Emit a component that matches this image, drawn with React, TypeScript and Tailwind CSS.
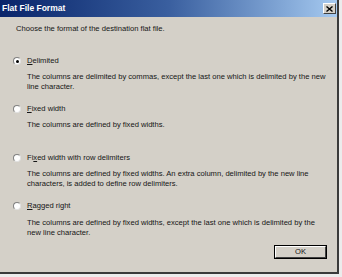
import React from 'react';

const font = { fontFamily: '"Liberation Sans", Arial, sans-serif' };

const Radio = ({ checked }: { checked?: boolean }) => (
  <span className="relative inline-block w-[8px] h-[8px] rounded-full bg-white border border-t-[#808080] border-l-[#808080] border-r-[#e0e0e0] border-b-[#e0e0e0] shrink-0">
    {checked && (
      <span className="absolute left-[1.5px] top-[1.5px] w-[3px] h-[3px] rounded-full bg-black" />
    )}
  </span>
);

interface OptionProps {
  label: string;
  mnemonic: number;
  checked?: boolean;
  lines: string[];
  gap: string;
}

const Option = ({ label, mnemonic, checked, lines, gap }: OptionProps) => (
  <div>
    <div className="flex items-center h-[10px] pl-[13px]">
      <Radio checked={checked} />
      <span className="ml-[6px] leading-[10px]">
        {label.slice(0, mnemonic)}
        <span className="underline">{label[mnemonic]}</span>
        {label.slice(mnemonic + 1)}
      </span>
    </div>
    <div className={`${gap} pl-[27px] leading-[10px]`}>
      {lines.map((l, i) => (
        <div key={i}>{l}</div>
      ))}
    </div>
  </div>
);

export default function App() {
  return (
    <div className="w-[342px] h-[277px] bg-[#ececec] overflow-hidden" style={font}>
      <div className="w-[339px] h-[274px] bg-[#d4d0c8] border-r-2 border-b-2 border-[#3a3a3a] flex flex-col text-[7.6px] text-[#151515]">
        {/* Title bar */}
        <div className="h-[17px] flex items-center justify-between pl-[2px] pr-[1px] bg-gradient-to-r from-[#0a246a] via-[#3a5f9f] to-[#a6caf0]">
          <span className="text-white font-bold text-[8.5px]">Flat File Format</span>
          <div className="w-[13px] h-[11px] bg-[#d4d0c8] border border-t-white border-l-white border-r-[#404040] border-b-[#404040] flex items-center justify-center">
            <svg width="7" height="6" viewBox="0 0 7 6">
              <path d="M0.5 0.5 L6.5 5.5 M6.5 0.5 L0.5 5.5" stroke="#000" strokeWidth="1.4" />
            </svg>
          </div>
        </div>

        <div className="mt-[7px] pl-[16px] leading-[10px]">Choose the format of the destination flat file.</div>

        <div className="mt-[22px]">
          <Option
            label="Delimited"
            mnemonic={0}
            checked
            gap="mt-[6px]"
            lines={[
              'The columns are delimited by commas, except the last one which is delimited by the new',
              'line character.',
            ]}
          />
        </div>
        <div className="mt-[12px]">
          <Option
            label="Fixed width"
            mnemonic={0}
            gap="mt-[6px]"
            lines={['The columns are defined by fixed widths.']}
          />
        </div>
        <div className="mt-[23px]">
          <Option
            label="Fixed width with row delimiters"
            mnemonic={2}
            gap="mt-[6px]"
            lines={[
              'The columns are defined by fixed widths. An extra column, delimited by the new line',
              'characters, is added to define row delimiters.',
            ]}
          />
        </div>
        <div className="mt-[12px]">
          <Option
            label="Ragged right"
            mnemonic={0}
            gap="mt-[7px]"
            lines={[
              'The columns are defined by fixed widths, except the last one which is delimited by the',
              'new line character.',
            ]}
          />
        </div>

        <div className="mt-[7px] flex justify-end pr-[10px]">
          <div className="w-[53px] h-[14px] border border-black">
            <div className="w-full h-full bg-[#d4d0c8] border border-t-white border-l-white border-r-[#404040] border-b-[#404040] flex items-center justify-center text-[7.6px]">
              OK
            </div>
          </div>
        </div>
      </div>
    </div>
  );
}
